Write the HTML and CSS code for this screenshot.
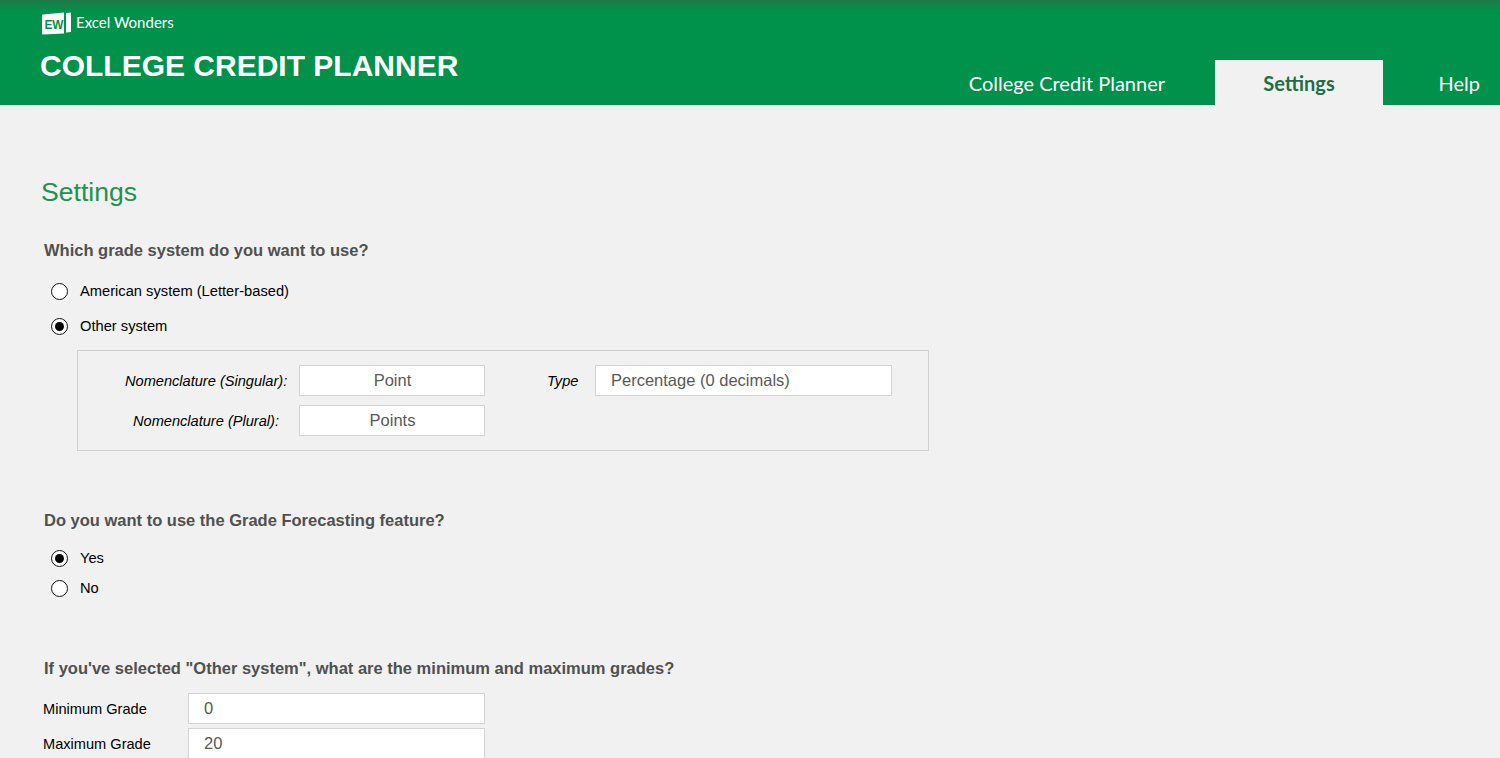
FILE: index.html
```html
<!DOCTYPE html>
<html lang="en">
<head>
  <meta charset="UTF-8">
  <title>College Credit Planner</title>
  <link rel="stylesheet" href="styles.css">
</head>
<body>

  <header class="topbar">
    <div class="brand">
      <div class="logo-row">
        <svg class="logo" viewBox="0 0 29 23" width="29" height="23">
          <path d="M1 2.5 L22 0.5 V21.5 L1 22.5 Q0 22.5 0 21.5 V3.5 Q0 2.6 1 2.5 Z" fill="#fff"/>
          <path d="M24 1 L29 0.5 V20 L24 20.5 Z" fill="#fff"/>
          <text class="logo-mark" x="2.5" y="16.5" textLength="19" lengthAdjust="spacingAndGlyphs">EW</text>
        </svg>
        <span class="logo-text">Excel Wonders</span>
      </div>
      <h1>COLLEGE CREDIT PLANNER</h1>
    </div>
    <nav class="tabs">
      <a class="tab tab-planner">College Credit Planner</a>
      <a class="tab tab-settings active">Settings</a>
      <a class="tab tab-help">Help</a>
    </nav>
  </header>

  <main class="content">
    <h2>Settings</h2>

    <!-- grade system -->
    <h3 class="q-grade">Which grade system do you want to use?</h3>
    <div class="radio-row gap-big"><span class="radio"></span>American system (Letter-based)</div>
    <div class="radio-row gap-big"><span class="radio checked"></span>Other system</div>

    <div class="other-box">
      <div class="box-col">
        <div class="field-row">
          <label class="lbl-singular">Nomenclature (Singular):</label>
          <div class="input center">Point</div>
        </div>
        <div class="field-row">
          <label class="lbl-plural">Nomenclature (Plural):</label>
          <div class="input center">Points</div>
        </div>
      </div>
      <div class="type-row">
        <label>Type</label>
        <div class="input type-input">Percentage (0 decimals)</div>
      </div>
    </div>

    <!-- forecasting -->
    <h3 class="q-forecast">Do you want to use the Grade Forecasting feature?</h3>
    <div class="radio-row gap-small"><span class="radio checked"></span>Yes</div>
    <div class="radio-row gap-small"><span class="radio"></span>No</div>

    <!-- min and max -->
    <h3 class="q-minmax">If you've selected "Other system", what are the minimum and maximum grades?</h3>
    <div class="grade-row"><label>Minimum Grade</label><div class="input grade-input">0</div></div>
    <div class="grade-row"><label>Maximum Grade</label><div class="input grade-input">20</div></div>
  </main>

</body>
</html>
```

FILE: styles.css
```css
/* Base */
html, body {
  height: 100%;
}

body {
  margin: 0;
  height: 758px;
  overflow: hidden;
  background-color: #f1f1f1;
  font-family: "Liberation Sans", Arial, sans-serif;
  color: #000;
}

/* Header */
.topbar {
  height: 105px;
  display: flex;
  justify-content: space-between;
  background: linear-gradient(#1f7a48 0, #00914a 11px);
}

.brand {
  padding: 12px 0 0 41px;
}

.logo-row {
  display: flex;
  align-items: center;
  padding-left: 1px;
  height: 23px;
}

.logo-mark {
  font-family: "Liberation Sans", Arial, sans-serif;
  font-size: 13px;
  font-weight: bold;
  fill: #00914a;
}

.logo-text {
  margin: -4px 0 0 5px;
  font-family: Lato, "Open Sans", sans-serif;
  font-size: 15px;
  color: #fff;
}

h1 {
  margin: 13px 0 0 -1px;
  font-size: 30px;
  line-height: 36px;
  font-weight: bold;
  color: #fff;
}

.tabs {
  display: flex;
  align-self: flex-end;
  height: 45px;
  font-family: Lato, "Open Sans", sans-serif;
  font-size: 20px;
}

.tab {
  display: flex;
  align-items: center;
  justify-content: center;
  color: #fff;
}

.tab-planner {
  padding-right: 50px;
}

.tab-settings {
  width: 168px;
}

.tab-help {
  width: 117px;
  justify-content: flex-end;
  padding-right: 20px;
  box-sizing: border-box;
}

.tab.active {
  background-color: #f1f1f1;
  color: #1e6f41;
  font-weight: bold;
}

/* Content */
.content {
  padding: 0 0 0 41px;
}

h2 {
  margin: 72px 0 0;
  font-size: 26.6px;
  line-height: 30px;
  font-weight: normal;
  color: #23924f;
}

h3 {
  margin: 0;
  font-size: 16.5px;
  line-height: 20px;
  font-weight: bold;
  color: #505050;
  padding-left: 3px;
}

.q-grade {
  margin-top: 33px;
}

.q-forecast {
  margin-top: 59px;
}

.q-minmax {
  margin-top: 60px;
}

.radio-row {
  display: flex;
  align-items: center;
  font-size: 14.7px;
  line-height: 20px;
  padding-left: 10px;
}

.gap-big {
  height: 20px;
  margin-top: 15px;
}

.gap-small {
  height: 20px;
  margin-top: 10px;
}

.q-grade + .gap-big {
  margin-top: 21px;
}

.q-forecast + .gap-small {
  margin-top: 18px;
}

.radio {
  box-sizing: border-box;
  width: 17px;
  height: 17px;
  margin-right: 12px;
  border: 1.5px solid #111;
  border-radius: 50%;
  background-color: #fff;
  display: flex;
  align-items: center;
  justify-content: center;
}

.radio.checked::after {
  content: "";
  width: 9px;
  height: 9px;
  border-radius: 50%;
  background-color: #000;
}

/* Other system box */
.other-box {
  box-sizing: border-box;
  width: 852px;
  height: 101px;
  margin: 14px 0 0 36px;
  padding: 14px 0 0;
  border: 1px solid #d0d0d0;
  display: flex;
}

.box-col {
  width: 407px;
}

.field-row {
  display: flex;
  align-items: center;
  height: 31px;
  margin-bottom: 9px;
}

.field-row label,
.type-row label {
  font-size: 14.6px;
  font-style: italic;
}

.field-row label {
  width: 221px;
  box-sizing: border-box;
}

.lbl-singular {
  padding-left: 47px;
}

.lbl-plural {
  padding-left: 55px;
}

.input {
  box-sizing: border-box;
  height: 31px;
  line-height: 29px;
  border: 1px solid #d4d4d4;
  background-color: #fff;
  font-size: 16.5px;
  color: #595959;
}

.input.center {
  width: 186px;
  padding-left: 1px;
  text-align: center;
}

.type-row {
  display: flex;
  align-items: center;
  height: 31px;
}

.type-row label {
  width: 110px;
  padding-left: 62px;
  box-sizing: border-box;
}

.type-input {
  width: 297px;
  padding-left: 15px;
}

/* Min and max */
.grade-row {
  display: flex;
  align-items: center;
  margin-top: 4px;
}

.q-minmax + .grade-row {
  margin-top: 15px;
}

.grade-row label {
  width: 147px;
  padding-left: 2px;
  box-sizing: border-box;
  font-size: 14.6px;
}

.grade-input {
  width: 297px;
  padding-left: 15px;
}
```
